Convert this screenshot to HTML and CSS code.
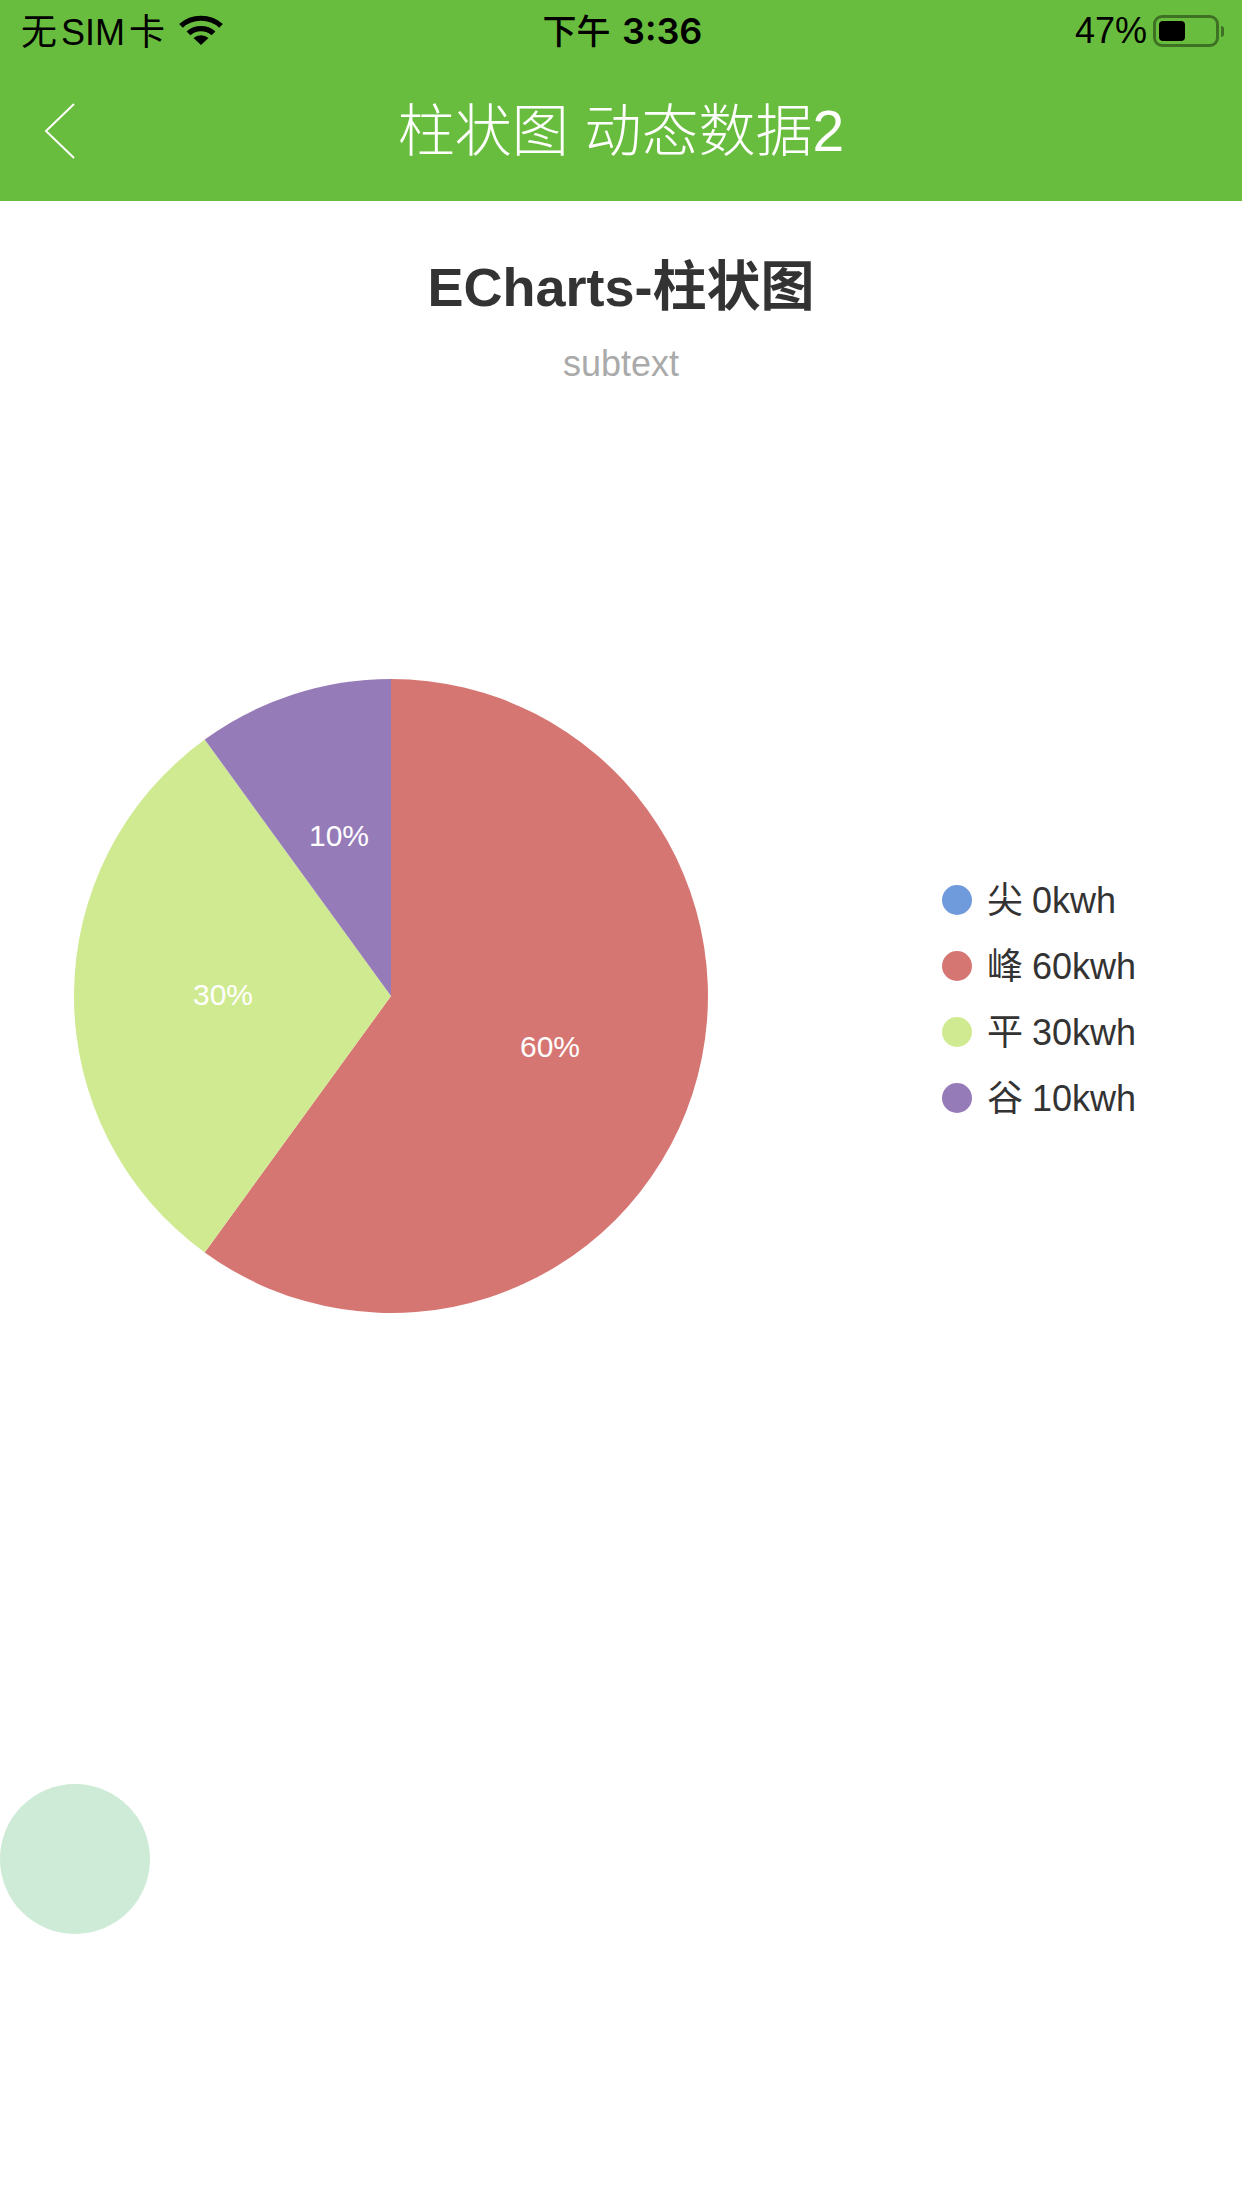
FILE: index.html
```html
<!DOCTYPE html>
<html lang="zh-CN">
<head>
  <meta charset="UTF-8" />
  <title>柱状图 动态数据2</title>
  <link rel="stylesheet" href="styles.css">
</head>

<body>

  <header class="top">
    <div class="status-bar">
      <div class="status-left">
        <span class="carrier">无 SIM 卡</span>
        <svg class="wifi" viewBox="0 0 46 32" width="46" height="30" preserveAspectRatio="none">
          <path d="M23 32 L15.5 24.5 A11 11 0 0 1 30.5 24.5 Z" fill="#000"/>
          <path d="M10.5 19.5 A18 18 0 0 1 35.5 19.5" fill="none" stroke="#000" stroke-width="5.5"/>
          <path d="M3 11.5 A29 29 0 0 1 43 11.5" fill="none" stroke="#000" stroke-width="5.5"/>
        </svg>
      </div>
      <div class="status-time">下午 <span class="clock">3:36</span></div>
      <div class="status-right">
        <span>47%</span>
        <div class="battery"><div class="battery-fill"></div></div>
        <div class="battery-nub"></div>
      </div>
    </div>
    <nav class="nav-bar">
      <svg class="back" viewBox="0 0 32 56" width="32" height="56">
        <path d="M30 1 L2 28 L30 55" fill="none" stroke="#fff" stroke-width="2"/>
      </svg>
      <div class="nav-title">柱状图 动态数据2</div>
    </nav>
  </header>

  <main class="chart">
    <h1 class="chart-title">ECharts-柱状图</h1>
    <div class="chart-sub">subtext</div>

    <div class="chart-body">
      <svg class="pie" viewBox="0 0 634 634" width="634" height="634">
        <path d="M317 317 L317 0 A317 317 0 1 1 130.7 573.5 Z" fill="#d67673"/>
        <path d="M317 317 L130.7 573.5 A317 317 0 0 1 130.7 60.5 Z" fill="#d0ea92"/>
        <path d="M317 317 L130.7 60.5 A317 317 0 0 1 317 0 Z" fill="#967bb9"/>
        <text x="476" y="378">60%</text>
        <text x="149" y="326">30%</text>
        <text x="265" y="167">10%</text>
      </svg>

      <ul class="legend">
        <li><span class="dot dot-blue"></span><span class="legend-text">尖 0kwh</span></li>
        <li><span class="dot dot-red"></span><span class="legend-text">峰 60kwh</span></li>
        <li><span class="dot dot-green"></span><span class="legend-text">平 30kwh</span></li>
        <li><span class="dot dot-purple"></span><span class="legend-text">谷 10kwh</span></li>
      </ul>
    </div>
  </main>

  <div class="float-ball"></div>

</body>
</html>
```

FILE: styles.css
```css
body {
  font-family: "Liberation Sans", "Noto Sans CJK SC", sans-serif;
  background: #fff;
  color: #333;
  margin: 0;
  width: 1242px;
  height: 2208px;
  position: relative;
  overflow: hidden;
}

.top {
  background: #69bd3e;
  height: 201px;
}

.status-bar {
  display: grid;
  grid-template-columns: 1fr auto 1fr;
  align-items: center;
  height: 60px;
  padding: 0 18px 0 21px;
  font-size: 36px;
  color: #000;
}

.status-left {
  display: flex;
  align-items: center;
  gap: 13px;
}

.carrier {
  word-spacing: -6px;
  margin-top: -2px;
}

.wifi {
  margin-top: 0;
}

.status-time {
  font-size: 34px;
  font-weight: 500;
  margin-top: -2px;
  word-spacing: 2px;
}

.clock {
  font-family: Inter, "Liberation Sans", sans-serif;
  font-size: 36px;
  font-weight: 600;
}

.status-right {
  display: flex;
  align-items: center;
  justify-content: flex-end;
  margin-top: 2px;
}

.battery {
  width: 66px;
  height: 32px;
  margin-left: 6px;
  padding: 3px;
  box-sizing: border-box;
  border: 3px solid rgba(0, 0, 0, 0.4);
  border-radius: 9px;
}

.battery-fill {
  width: 26px;
  height: 100%;
  background: #000;
  border-radius: 4px;
}

.battery-nub {
  width: 3px;
  height: 11px;
  margin-left: 2px;
  background: rgba(0, 0, 0, 0.4);
  border-radius: 0 3px 3px 0;
}

.nav-bar {
  position: relative;
  display: flex;
  align-items: center;
  justify-content: center;
  height: 132px;
}

.back {
  position: absolute;
  left: 44px;
  top: 43px;
}

.nav-title {
  font-size: 57px;
  font-weight: 300;
  color: #fff;
}

.chart-title {
  margin: 52px 0 0;
  font-size: 54px;
  line-height: 68px;
  font-weight: bold;
  text-align: center;
  color: #333;
}

.chart-sub {
  margin-top: 22px;
  font-size: 36px;
  line-height: 42px;
  text-align: center;
  color: #aaa;
}

.chart-body {
  display: flex;
  align-items: center;
  margin-top: 294px;
  padding-left: 74px;
}

.pie text {
  font-size: 30px;
  fill: #fff;
  text-anchor: middle;
}

.legend {
  list-style: none;
  margin: 6px 0 0 234px;
  padding: 0;
  font-size: 36px;
  color: #333;
}

.legend li {
  display: flex;
  align-items: center;
  height: 66px;
}

.legend-text {
  padding-bottom: 7px;
  word-spacing: -1px;
}

.dot {
  width: 30px;
  height: 30px;
  margin-right: 15px;
  border-radius: 50%;
}

.dot-blue { background: #6f9bdc; }
.dot-red { background: #d67673; }
.dot-green { background: #d0ea92; }
.dot-purple { background: #967bb9; }

.float-ball {
  position: absolute;
  left: 0;
  top: 1784px;
  width: 150px;
  height: 150px;
  border-radius: 50%;
  background: #cdebd6;
}
```
